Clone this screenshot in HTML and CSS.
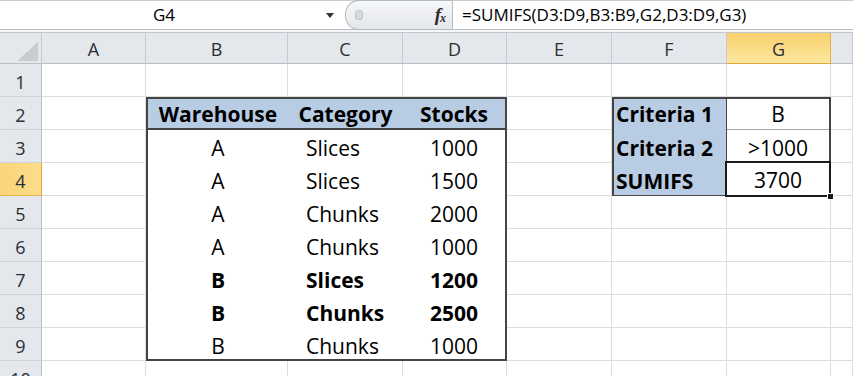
FILE: index.html
```html
<!DOCTYPE html>
<html lang="en">
<head>
    <meta charset="UTF-8">
    <meta name="viewport" content="width=device-width, initial-scale=1.0">
    <title>SUMIFS example</title>
    <link rel="stylesheet" href="styles.css">
</head>
<body>
    <div class="formula-bar">
        <div class="name-box">
            <span class="name">G4</span>
            <span class="name-arrow"></span>
        </div>
        <div class="fx-box">
            <span class="grip"></span>
            <span class="fx"><i>f</i><sub>x</sub></span>
        </div>
        <div class="formula">=SUMIFS(D3:D9,B3:B9,G2,D3:D9,G3)</div>
    </div>
    <div class="bar-gap"></div>

    <div class="sheet">
        <!-- column headers -->
        <div class="cell corner"><span class="select-all"></span></div>
        <div class="cell col-head">A</div>
        <div class="cell col-head">B</div>
        <div class="cell col-head">C</div>
        <div class="cell col-head">D</div>
        <div class="cell col-head">E</div>
        <div class="cell col-head">F</div>
        <div class="cell col-head active">G</div>
        <div class="cell col-head"></div>

        <!-- row 1 -->
        <div class="cell row-head">1</div>
        <div class="cell"></div>
        <div class="cell"></div>
        <div class="cell"></div>
        <div class="cell"></div>
        <div class="cell"></div>
        <div class="cell"></div>
        <div class="cell"></div>
        <div class="cell"></div>

        <!-- row 2 -->
        <div class="cell row-head">2</div>
        <div class="cell"></div>
        <div class="stock-table">
            <div class="th">Warehouse</div>
            <div class="th">Category</div>
            <div class="th">Stocks</div>

            <div class="td">A</div>
            <div class="td left">Slices</div>
            <div class="td">1000</div>

            <div class="td">A</div>
            <div class="td left">Slices</div>
            <div class="td">1500</div>

            <div class="td">A</div>
            <div class="td left">Chunks</div>
            <div class="td">2000</div>

            <div class="td">A</div>
            <div class="td left">Chunks</div>
            <div class="td">1000</div>

            <div class="td bold">B</div>
            <div class="td left bold">Slices</div>
            <div class="td bold">1200</div>

            <div class="td bold">B</div>
            <div class="td left bold">Chunks</div>
            <div class="td bold">2500</div>

            <div class="td">B</div>
            <div class="td left">Chunks</div>
            <div class="td">1000</div>
        </div>
        <div class="cell"></div>
        <div class="criteria">
            <div class="label first">Criteria 1</div>
            <div class="value first">B</div>
            <div class="label">Criteria 2</div>
            <div class="value">&gt;1000</div>
            <div class="label">SUMIFS</div>
            <div class="value selected">3700</div>
        </div>
        <div class="cell"></div>

        <!-- row 3 -->
        <div class="cell row-head">3</div>
        <div class="cell"></div>
        <div class="cell"></div>
        <div class="cell"></div>

        <!-- row 4 -->
        <div class="cell row-head active">4</div>
        <div class="cell"></div>
        <div class="cell"></div>
        <div class="cell"></div>

        <!-- rows 5 - 9 -->
        <div class="cell row-head">5</div>
        <div class="cell"></div>
        <div class="cell"></div>
        <div class="cell"></div>
        <div class="cell"></div>
        <div class="cell"></div>

        <div class="cell row-head">6</div>
        <div class="cell"></div>
        <div class="cell"></div>
        <div class="cell"></div>
        <div class="cell"></div>
        <div class="cell"></div>

        <div class="cell row-head">7</div>
        <div class="cell"></div>
        <div class="cell"></div>
        <div class="cell"></div>
        <div class="cell"></div>
        <div class="cell"></div>

        <div class="cell row-head">8</div>
        <div class="cell"></div>
        <div class="cell"></div>
        <div class="cell"></div>
        <div class="cell"></div>
        <div class="cell"></div>

        <div class="cell row-head">9</div>
        <div class="cell"></div>
        <div class="cell"></div>
        <div class="cell"></div>
        <div class="cell"></div>
        <div class="cell"></div>

        <!-- row 10 -->
        <div class="cell row-head">10</div>
        <div class="cell"></div>
        <div class="cell"></div>
        <div class="cell"></div>
        <div class="cell"></div>
        <div class="cell"></div>
        <div class="cell"></div>
        <div class="cell"></div>
        <div class="cell"></div>
    </div>
</body>
</html>
```

FILE: styles.css
```css
body {
    margin: 0;
    padding: 0;
    font-family: 'Open Sans', 'Liberation Sans', sans-serif;
    color: #000;
    background: #fff;
    overflow: hidden;
    height: 376px;
}

/* formula bar */

.formula-bar {
    display: flex;
    height: 28px;
    border-top: 1px solid #c9cdd3;
    border-bottom: 1px solid #b9bec5;
    background: #fff;
}

.name-box {
    width: 343px;
    display: flex;
    align-items: center;
}

.name {
    flex: 1;
    text-align: center;
    font-size: 17px;
    line-height: 28px;
    padding-left: 2px;
}

.name-arrow {
    width: 0;
    height: 0;
    border-left: 4px solid transparent;
    border-right: 4px solid transparent;
    border-top: 5px solid #333;
    margin-right: 9px;
}

.fx-box {
    width: 106px;
    margin-left: 2px;
    display: flex;
    align-items: center;
    justify-content: space-between;
    border: 1px solid #b4b9c0;
    border-right: none;
    border-radius: 14px 0 0 14px;
    background: linear-gradient(#f6f7f8, #e3e6ea);
    margin-top: -1px;
    margin-bottom: -1px;
}

.grip {
    width: 6px;
    height: 8px;
    margin-left: 9px;
    border-radius: 3px;
    background: #d6d9dd;
    border: 1px solid #bfc3c9;
}

.fx {
    font-family: 'Liberation Serif', serif;
    font-size: 19px;
    font-weight: 700;
    color: #2a2a2a;
    margin-right: 7px;
    letter-spacing: -1px;
}

.fx sub {
    font-size: 12px;
    font-style: italic;
    vertical-align: -1px;
}

.formula {
    flex: 1;
    border-left: 1px solid #b9bec5;
    padding-left: 9px;
    font-size: 17px;
    line-height: 28px;
    white-space: nowrap;
}

.bar-gap {
    height: 2px;
    background: #f5f6f7;
    border-bottom: 1px solid #c3c7cd;
}

/* sheet grid */

.sheet {
    display: grid;
    grid-template-columns: 42px 104px 142px 115px 104px 105px 115px 104px 1fr;
    grid-template-rows: 31px repeat(10, 33px);
}

.cell {
    box-sizing: border-box;
    border-right: 1px solid #dcdddf;
    border-bottom: 1px solid #dcdddf;
    background: #fff;
}

.corner {
    display: flex;
    align-items: flex-end;
    justify-content: flex-end;
    padding: 0 3px 2px 0;
    background: #e4e7eb;
    border-right-color: #c3c8cf;
    border-bottom-color: #b9bec5;
}

.select-all {
    width: 21px;
    height: 19px;
    background: linear-gradient(to bottom right, transparent 50%, #c9ccd1 50%);
}

.col-head {
    background: #e4e7eb;
    border-right-color: #c6cad0;
    border-bottom-color: #b9bec5;
    text-align: center;
    font-size: 18px;
    line-height: 26px;
    padding-top: 3px;
    color: #2b2f36;
}

.col-head.active {
    background: linear-gradient(#f7d06b, #fde7a0);
    border-right-color: #e2b04a;
    border-bottom-color: #e2a93a;
}

.row-head {
    background: #e4e7eb;
    border-right-color: #b7bdc5;
    border-bottom-color: #cfd3d9;
    text-align: center;
    font-size: 18px;
    line-height: 26px;
    padding-top: 5px;
    color: #2b2f36;
}

.row-head.active {
    background: linear-gradient(90deg, #f9d57a, #fcdc8b);
    border-right-color: #e2a93a;
    border-bottom-color: #e6b650;
}

/* stock table B2:D9 */

.stock-table {
    grid-column: 3 / 6;
    grid-row: 3 / 11;
    display: grid;
    grid-template-columns: 140px 115px 1fr;
    grid-template-rows: 31px repeat(6, 33px) 1fr;
    border: 2px solid #444;
    background: #fff;
    font-size: 21px;
}

.th {
    background: #b8cce4;
    border-bottom: 2px solid #444;
    font-weight: 700;
    text-align: center;
    line-height: 28px;
    padding-top: 1px;
}

.td {
    text-align: center;
    line-height: 28px;
    padding-top: 4px;
}

.td.left {
    text-align: left;
    padding-left: 18px;
}

.bold {
    font-weight: 700;
}

/* criteria F2:G4 */

.criteria {
    grid-column: 7 / 9;
    grid-row: 3 / 6;
    display: grid;
    grid-template-columns: 113px 1fr;
    grid-template-rows: 31px 33px 1fr;
    border: 2px solid #444;
    font-size: 21px;
}

.label {
    background: #b8cce4;
    border-right: 1px solid #444;
    font-weight: 700;
    padding-left: 2px;
    line-height: 28px;
    padding-top: 4px;
    white-space: nowrap;
}

.value {
    background: #fff;
    text-align: center;
    line-height: 28px;
    padding-top: 4px;
    border-bottom: 1px solid #a6a6a6;
}

.label.first,
.value.first {
    padding-top: 1px;
}

.value.selected {
    position: relative;
    z-index: 1;
    border-bottom: none;
    box-shadow: 0 0 0 2px #1a1a1a;
    padding-top: 3px;
}

.value.selected::after {
    content: '';
    position: absolute;
    right: -5px;
    bottom: -5px;
    width: 5px;
    height: 5px;
    background: #1a1a1a;
    border: 1px solid #fff;
}
```
